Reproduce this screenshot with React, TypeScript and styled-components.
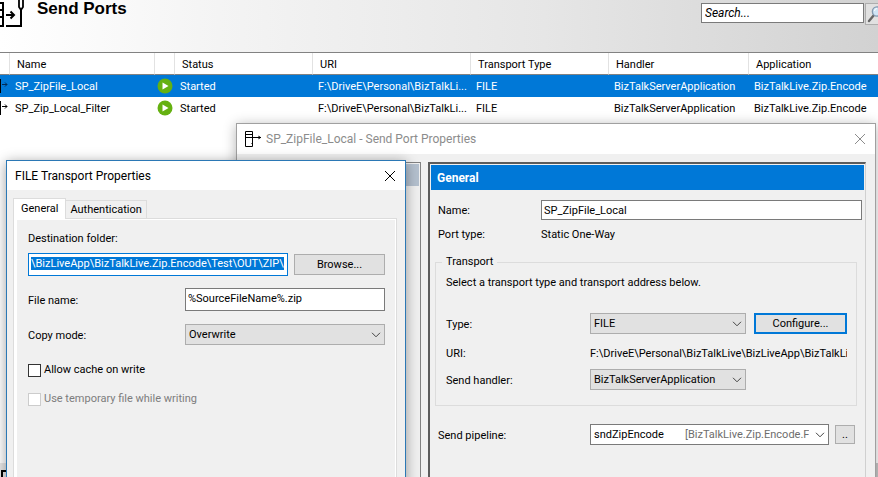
import React, { useEffect, useRef } from "react";
import styled, { createGlobalStyle } from "styled-components";

const blue = "#0078d7";
const face = "#f0f0f0";

const GlobalStyle = createGlobalStyle`
  *, *::before, *::after { box-sizing: border-box; }
  body { margin: 0; background: #fff; overflow: hidden; }
  body, input, select, button, table {
    font-family: Roboto, "Liberation Sans", Arial, sans-serif;
    font-size: 11px;
    line-height: 14px;
    color: #000;
  }
  ::selection { background: ${blue}; color: #fff; }
`;

const Desktop = styled.div`
  position: relative;
  display: flex;
  flex-direction: column;
  min-height: 100vh;
  overflow: hidden;
`;

/* console page */

const Banner = styled.header`
  display: flex;
  align-items: flex-start;
  height: 52px;
  background: linear-gradient(90deg, #fff 0%, #f4f4f4 25%, #e6e6e6 62%, #d2d2d2 100%);
`;

const BannerIcon = styled.svg`
  display: block;
  flex: none;
  width: 24px;
  height: 28px;
`;

const BannerTitle = styled.h1`
  flex: 1;
  margin: 0 0 0 13px;
  font-family: "Liberation Sans", Arial, sans-serif;
  font-size: 17px;
  line-height: 17px;
  font-weight: 700;
`;

const SearchBar = styled.form`
  display: flex;
  gap: 1px;
  margin-top: 3px;
  margin-right: -9px;
`;

const SearchInput = styled.input`
  width: 163px;
  height: 20px;
  padding: 0 3px;
  border: 1px solid #7a7a7a;
  border-radius: 0;
  background: #fff;
  font-size: 12px;
  font-style: italic;
  &::placeholder { color: #000; }
`;

const SearchButton = styled.button`
  display: grid;
  place-items: center;
  width: 22px;
  height: 22px;
  padding: 0;
  border: 1px solid #adadad;
  background: #e1e1e1;
`;

const PortTable = styled.table`
  width: 100%;
  border-top: 1px solid #828282;
  border-spacing: 0;
  table-layout: fixed;
`;

const HeadCell = styled.th`
  height: 22px;
  padding: 2px 7px 0;
  border-right: 1px solid #e2e2e2;
  border-bottom: 1px solid #828282;
  font-weight: 400;
  text-align: left;
  white-space: nowrap;
  &:last-child { border-right: 0; }
`;

const PortRow = styled.tr<{ $selected?: boolean }>`
  background: ${(p) => (p.$selected ? blue : "#fff")};
  color: ${(p) => (p.$selected ? "#fff" : "#000")};
`;

const Cell = styled.td<{ $icon?: boolean }>`
  height: 22px;
  padding: ${(p) => (p.$icon ? "0 2px" : "2px 3px 0 5px")};
  overflow: hidden;
  text-overflow: ${(p) => (p.$icon ? "clip" : "ellipsis")};
  white-space: nowrap;
  svg { display: block; }
`;

const EdgeCell = styled(Cell)`
  padding: 0;
`;

const LowerBand = styled.footer`
  height: 14px;
  margin-top: auto;
  background: linear-gradient(90deg, #e8e8e8, #c9c9c9);
`;

/* windows */

const Window = styled.section<{ $active?: boolean }>`
  position: absolute;
  bottom: -20px;
  display: flex;
  flex-direction: column;
  border: 1px solid ${(p) => (p.$active ? "#2b78b5" : "#a0a0a0")};
  background: ${face};
  box-shadow: 0 2px 12px rgba(0, 0, 0, ${(p) => (p.$active ? 0.38 : 0.3)});
`;

const SendPortWindow = styled(Window)`
  top: 123px;
  left: 236px;
  right: 2px;
`;

const FileWindow = styled(Window)`
  top: 160px;
  left: 6px;
  width: 400px;
`;

const TitleBar = styled.header<{ $active?: boolean }>`
  display: flex;
  align-items: center;
  gap: 4px;
  height: ${(p) => (p.$active ? "29px" : "30px")};
  padding: 0 8px;
  background: #fff;
  color: ${(p) => (p.$active ? "#000" : "#8c8c8c")};
`;

const WindowTitle = styled.h2`
  flex: 1;
  margin: 0;
  font-size: 12px;
  line-height: 16px;
  font-weight: 400;
`;

const CloseButton = styled.button`
  display: grid;
  place-items: center;
  width: 14px;
  height: 14px;
  padding: 0;
  border: 0;
  background: none;
  color: inherit;
`;

const Panes = styled.div`
  display: flex;
  flex: 1;
  gap: 7px;
  padding: 8px 9px 0 8px;
`;

const NavPane = styled.nav`
  width: 176px;
  border: 1px solid #828282;
  padding: 1px;
`;

const NavItem = styled.div`
  height: 22px;
  background: #b4c0ce;
`;

const DetailPane = styled.div`
  flex: 1;
  min-width: 0;
  padding: 1px;
  border: 2px solid;
  border-right-width: 1px;
  border-color: #5c5c5c #d0d0d0 #d0d0d0 #5c5c5c;
`;

const DetailHeading = styled.h3`
  margin: 0;
  padding: 1px 6px 0;
  background: ${blue};
  color: #fff;
  font-size: 12px;
  line-height: 24px;
  font-weight: 700;
`;

const DetailForm = styled.form`
  display: flex;
  flex-direction: column;
  padding: 9px 2px 0 4px;
`;

const FieldRow = styled.div<{ $label: number; $height?: number; $top?: number; $indent?: number }>`
  display: grid;
  grid-template-columns: ${(p) => p.$label}px minmax(0, 1fr);
  align-items: center;
  min-height: ${(p) => p.$height ?? 21}px;
  margin-top: ${(p) => p.$top ?? 0}px;
  padding-left: ${(p) => p.$indent ?? 0}px;
  > label { padding-top: 2px; }
`;

const Controls = styled.div<{ $gap: number }>`
  display: flex;
  align-items: center;
  gap: ${(p) => p.$gap}px;
  min-width: 0;
`;

const TextValue = styled.output`
  overflow: hidden;
  white-space: nowrap;
`;

const TextInput = styled.input<{ $focus?: boolean; $tall?: boolean }>`
  flex: 1;
  width: 100%;
  min-width: 0;
  height: ${(p) => (p.$tall ? 23 : 20)}px;
  padding: ${(p) => (p.$tall ? "0 2px 3px" : "1px 2px 0")};
  border: 1px solid ${(p) => (p.$focus ? blue : "#7a7a7a")};
  border-radius: 0;
  outline: 0;
  background: #fff;
`;

const Group = styled.fieldset`
  min-width: 0;
  margin: 10px 5px 0 0;
  padding: 7px 9px 15px 10px;
  border: 1px solid #dcdcdc;
`;

const Legend = styled.legend`
  margin-left: -4px;
  padding: 0 4px;
`;

const Hint = styled.p`
  margin: 0;
`;

const SelectFrame = styled.span<{ $width: string; $editable?: boolean }>`
  display: grid;
  grid-template-columns: minmax(0, 1fr) 17px;
  align-items: center;
  width: ${(p) => p.$width};
  height: 21px;
  border: 1px solid ${(p) => (p.$editable ? "#7a7a7a" : "#adadad")};
  background: ${(p) => (p.$editable ? "#fff" : "#e1e1e1")};
  > * { grid-row: 1; }
  > svg { grid-column: 2; justify-self: center; pointer-events: none; }
`;

const NativeSelect = styled.select`
  grid-column: 1 / 3;
  width: 100%;
  height: 19px;
  padding: 1px 18px 0 3px;
  border: 0;
  border-radius: 0;
  outline: 0;
  background: transparent;
  appearance: none;
`;

const SelectNote = styled.span`
  grid-column: 1;
  margin-left: 94px;
  margin-right: 2px;
  padding-top: 1px;
  overflow: hidden;
  color: #6d6d6d;
  white-space: nowrap;
  pointer-events: none;
`;

const PushButton = styled.button<{ $width: number; $primary?: boolean; $small?: boolean }>`
  flex: none;
  width: ${(p) => p.$width}px;
  height: ${(p) => (p.$small ? 19 : 21)}px;
  padding: 1px 0 0;
  border: ${(p) => (p.$primary ? `2px solid ${blue}` : "1px solid #adadad")};
  border-radius: 0;
  background: #e1e1e1;
`;

const TabArea = styled.div`
  display: flex;
  flex: 1;
  flex-direction: column;
  padding: 8px 8px 0 6px;
`;

const TabList = styled.div`
  display: flex;
  align-items: flex-end;
  height: 20px;
`;

const Tab = styled.button<{ $current?: boolean }>`
  height: ${(p) => (p.$current ? 21 : 18)}px;
  margin-bottom: ${(p) => (p.$current ? -1 : 0)}px;
  padding: ${(p) => (p.$current ? "0 7px" : "1px 4px 0")};
  border: 1px solid #dcdcdc;
  border-left-width: ${(p) => (p.$current ? 1 : 0)}px;
  border-bottom: 0;
  background: ${(p) => (p.$current ? "#fff" : face)};
  z-index: 1;
`;

const TabPage = styled.form`
  flex: 1;
  padding: 11px 11px 0 11px;
  border: 1px solid #dcdcdc;
  box-shadow: inset 3px 1px 0 #fff, inset -1px 0 0 #fff;
`;

const BlockLabel = styled.label`
  display: block;
  padding: 2px 3px 7px 3px;
`;

const Indented = styled.div`
  padding-left: 3px;
`;

const CheckLabel = styled.label<{ $disabled?: boolean; $top: number }>`
  display: flex;
  align-items: center;
  gap: 3px;
  margin-top: ${(p) => p.$top}px;
  padding-left: 3px;
  color: ${(p) => (p.$disabled ? "#7d7d7d" : "#000")};
`;

const CheckBox = styled.input`
  width: 13px;
  height: 13px;
  margin: 0;
  border: 1px solid #333;
  background: #fff;
  appearance: none;
  &:disabled { border-color: #ccc; }
`;

/* icons */

const PlayIcon = () => (
  <svg width="16" height="16" viewBox="0 0 16 16" aria-hidden="true">
    <circle cx="8" cy="8" r="7.5" fill="#65b111" />
    <path d="M5.5 4.5v7l6-3.5z" fill="#fff" />
  </svg>
);

const EdgeArrow = ({ color }: { color: string }) => (
  <svg width="9" height="16" viewBox="0 0 9 16" aria-hidden="true">
    <path d="M.5 1v14" stroke="#000" strokeWidth="1" />
    <path d="M2 6.5h5M5 4.5l2 2-2 2" fill="none" stroke={color} />
  </svg>
);

const PortIcon = () => (
  <svg width="17" height="17" viewBox="0 0 17 17" fill="none" stroke="#000" aria-hidden="true">
    <path d="M.5.5h7v15h-7zM.5 3.5h7M.5 6.5h7M8 6.5h8" />
    <path d="M13.5 4.5v4l2.5-2z" fill="#000" stroke="none" />
    <path d="M6 12.5h1" stroke="#777" />
  </svg>
);

const CloseIcon = () => (
  <svg width="12" height="12" viewBox="0 0 12 12" stroke="currentColor" aria-hidden="true">
    <path d="M1 1l10 10M11 1L1 11" />
  </svg>
);

const Chevron = () => (
  <svg width="10" height="6" viewBox="0 0 10 6" fill="none" stroke="#444" aria-hidden="true">
    <path d="M1 .8l4 4 4-4" />
  </svg>
);

const Magnifier = () => (
  <svg width="18" height="18" viewBox="0 0 18 18" aria-hidden="true">
    <path d="M2 16l5-6" stroke="#666" strokeWidth="2.4" strokeLinecap="round" />
    <circle cx="10" cy="6.5" r="4.6" fill="#cfe4f5" stroke="#8299b0" strokeWidth="1.4" />
    <path d="M7.5 6a2.6 2.6 0 0 1 2.5-2.5" fill="none" stroke="#fff" />
  </svg>
);

type SelectProps = { id: string; value: string; width: string; note?: string };

const Select = ({ id, value, width, note }: SelectProps) => (
  <SelectFrame $width={width} $editable={Boolean(note)}>
    <NativeSelect id={id} defaultValue={value}>
      <option>{value}</option>
    </NativeSelect>
    {note && <SelectNote>{note}</SelectNote>}
    <Chevron />
  </SelectFrame>
);

const columnWidths = [10, 145, 20, 138, 158, 138, 140];
const headings = ["", "Name", "", "Status", "URI", "Transport Type", "Handler", "Application"];
const ports = [
  { name: "SP_ZipFile_Local", selected: true },
  { name: "SP_Zip_Local_Filter", selected: false },
];

export default function App() {
  const folder = useRef<HTMLInputElement>(null);

  useEffect(() => {
    folder.current?.focus({ preventScroll: true });
    folder.current?.select();
  }, []);

  return (
    <>
      <GlobalStyle />
      <Desktop>
        <Banner>
          <BannerIcon viewBox="0 0 24 28" fill="none" stroke="#000" strokeWidth="2" aria-hidden="true">
            <path d="M0 3h3v23H0M0 10h3M0 17h3M6 26h15V10" />
            <path d="M19 0v7l2 3 2-3V0" strokeWidth="1.8" />
            <path d="M6 15h8M10.5 11.5L14 15l-3.5 3.5" />
          </BannerIcon>
          <BannerTitle>Send Ports</BannerTitle>
          <SearchBar onSubmit={(e) => e.preventDefault()}>
            <SearchInput aria-label="Search" placeholder="Search..." />
            <SearchButton aria-label="Find"><Magnifier /></SearchButton>
          </SearchBar>
        </Banner>

        <PortTable>
          <colgroup>
            {columnWidths.map((w, i) => <col key={i} width={w} />)}
            <col />
          </colgroup>
          <thead>
            <tr>{headings.map((h, i) => <HeadCell key={i}>{h}</HeadCell>)}</tr>
          </thead>
          <tbody>
            {ports.map((p) => (
              <PortRow key={p.name} $selected={p.selected}>
                <EdgeCell $icon><EdgeArrow color={p.selected ? "#012a55" : "#000"} /></EdgeCell>
                <Cell>{p.name}</Cell>
                <Cell $icon><PlayIcon /></Cell>
                <Cell>Started</Cell>
                <Cell>F:\DriveE\Personal\BizTalkLi...</Cell>
                <Cell>FILE</Cell>
                <Cell>BizTalkServerApplication</Cell>
                <Cell>BizTalkLive.Zip.Encode</Cell>
              </PortRow>
            ))}
          </tbody>
        </PortTable>

        <LowerBand>
          <svg width="6" height="14" viewBox="0 0 6 14" fill="none" stroke="#000" strokeWidth="2" aria-hidden="true">
            <path d="M2 14V8h4" />
          </svg>
        </LowerBand>

        <SendPortWindow>
          <TitleBar>
            <PortIcon />
            <WindowTitle>SP_ZipFile_Local - Send Port Properties</WindowTitle>
            <CloseButton aria-label="Close"><CloseIcon /></CloseButton>
          </TitleBar>
          <Panes>
            <NavPane><NavItem /></NavPane>
            <DetailPane>
              <DetailHeading>General</DetailHeading>
              <DetailForm onSubmit={(e) => e.preventDefault()}>
                <FieldRow $label={103} $indent={3}>
                  <label htmlFor="port-name">Name:</label>
                  <TextInput id="port-name" defaultValue="SP_ZipFile_Local" />
                </FieldRow>
                <FieldRow $label={103} $indent={3} $top={4}>
                  <span>Port type:</span>
                  <TextValue>Static One-Way</TextValue>
                </FieldRow>
                <Group>
                  <Legend>Transport</Legend>
                  <Hint>Select a transport type and transport address below.</Hint>
                  <FieldRow $label={144} $top={23}>
                    <label htmlFor="type">Type:</label>
                    <Controls $gap={8}>
                      <Select id="type" value="FILE" width="156px" />
                      <PushButton type="button" $width={93} $primary>Configure...</PushButton>
                    </Controls>
                  </FieldRow>
                  <FieldRow $label={144} $top={9}>
                    <span>URI:</span>
                    <TextValue>F:\DriveE\Personal\BizTalkLive\BizLiveApp\BizTalkLi</TextValue>
                  </FieldRow>
                  <FieldRow $label={144} $top={5}>
                    <label htmlFor="handler">Send handler:</label>
                    <Select id="handler" value="BizTalkServerApplication" width="156px" />
                  </FieldRow>
                </Group>
                <FieldRow $label={152} $indent={3} $top={18}>
                  <label htmlFor="pipeline">Send pipeline:</label>
                  <Controls $gap={6}>
                    <Select id="pipeline" value="sndZipEncode" width="239px" note="[BizTalkLive.Zip.Encode.F" />
                    <PushButton type="button" $width={20} $small>..</PushButton>
                  </Controls>
                </FieldRow>
              </DetailForm>
            </DetailPane>
          </Panes>
        </SendPortWindow>

        <FileWindow $active>
          <TitleBar $active>
            <WindowTitle>FILE Transport Properties</WindowTitle>
            <CloseButton aria-label="Close"><CloseIcon /></CloseButton>
          </TitleBar>
          <TabArea>
            <TabList role="tablist">
              <Tab role="tab" aria-selected $current>General</Tab>
              <Tab role="tab" aria-selected={false}>Authentication</Tab>
            </TabList>
            <TabPage onSubmit={(e) => e.preventDefault()}>
              <BlockLabel htmlFor="folder">Destination folder:</BlockLabel>
              <Indented>
                <Controls $gap={6}>
                  <TextInput
                    id="folder"
                    ref={folder}
                    $focus
                    $tall
                    defaultValue="\BizLiveApp\BizTalkLive.Zip.Encode\Test\OUT\ZIP\"
                  />
                  <PushButton type="button" $width={91}>Browse...</PushButton>
                </Controls>
              </Indented>
              <FieldRow $label={157} $indent={3} $top={12} $height={23}>
                <label htmlFor="file-name">File name:</label>
                <TextInput id="file-name" $tall defaultValue="%SourceFileName%.zip" />
              </FieldRow>
              <FieldRow $label={157} $indent={3} $top={13}>
                <label htmlFor="copy-mode">Copy mode:</label>
                <Select id="copy-mode" value="Overwrite" width="100%" />
              </FieldRow>
              <CheckLabel $top={18}>
                <CheckBox type="checkbox" />
                Allow cache on write
              </CheckLabel>
              <CheckLabel $top={15} $disabled>
                <CheckBox type="checkbox" disabled />
                Use temporary file while writing
              </CheckLabel>
            </TabPage>
          </TabArea>
        </FileWindow>
      </Desktop>
    </>
  );
}
